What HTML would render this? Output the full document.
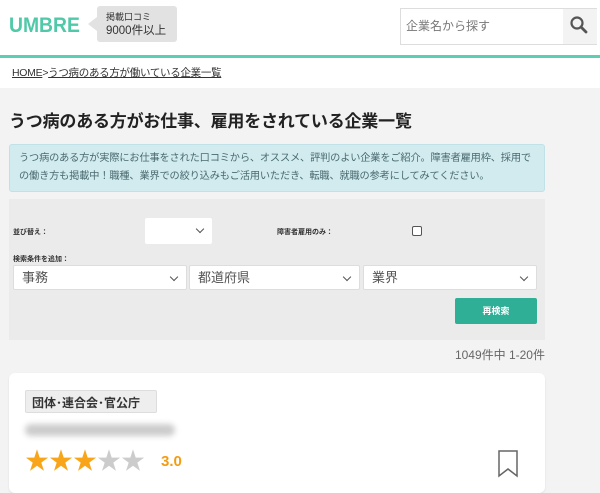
<!DOCTYPE html>
<html><head><meta charset="utf-8"><style>
*{box-sizing:border-box;margin:0;padding:0}
body{width:600px;height:480px;overflow:hidden;background:#f3f3f3;font-family:"Liberation Sans","Noto Sans CJK JP",sans-serif;color:#333;position:relative}
.abs{position:absolute}
.hdr{left:0;top:0;width:600px;height:58px;background:#fff;border-bottom:3px solid #5ccfb2}
.bc{left:0;top:58px;width:600px;height:30px;background:#fff;font-size:10.5px;padding:7px 12px;letter-spacing:-0.3px}
.bc a{color:#333;text-decoration:underline}
.sel{background:#fff;border:1px solid #ddd;border-radius:2px;font-size:13px;color:#555;padding:0 8px;line-height:23px}
.sel:after{content:"";position:absolute;right:9px;top:8px;width:5px;height:5px;border-right:1px solid #555;border-bottom:1px solid #555;transform:rotate(45deg)}
.star{font-size:24px;line-height:24px}
</style></head><body>
<div class="abs hdr">
 <div class="abs" style="left:9px;top:14px;font-size:21px;font-weight:bold;color:#4fc9a8;transform:scaleX(0.92);transform-origin:left">UMBRE</div>
 <div class="abs" style="left:97px;top:6px;width:80px;height:36px;background:#e2e2e2;border-radius:3px;font-size:9px;padding:4px 0 0 9px;line-height:14px">掲載口コミ<br><span style="font-size:11.5px">9000件以上</span></div>
 <div class="abs" style="left:88px;top:17px;width:0;height:0;border-top:7px solid transparent;border-bottom:7px solid transparent;border-right:9px solid #e2e2e2"></div>
 <div class="abs" style="left:400px;top:8px;width:197px;height:37px;border:1px solid #ddd;background:#fff"></div>
 <div class="abs" style="left:406px;top:17px;font-size:12px;color:#777">企業名から探す</div>
 <div class="abs" style="left:563px;top:9px;width:34px;height:35px;background:#f3f3f3"></div>
 <svg class="abs" style="left:569px;top:15px" width="20" height="20" viewBox="0 0 20 20"><circle cx="8" cy="8" r="5.5" fill="none" stroke="#555" stroke-width="2.2"/><path d="M12 12l5 5" stroke="#555" stroke-width="2.8" stroke-linecap="round"/></svg>
</div>
<div class="abs bc"><a>HOME</a>&gt;<a>うつ病のある方が働いている企業一覧</a></div>
<div class="abs" style="left:9px;top:107px;font-size:17px;font-weight:bold;color:#222;letter-spacing:-0.2px">うつ病のある方がお仕事、雇用をされている企業一覧</div>
<div class="abs" style="left:9px;top:144px;width:536px;height:48px;background:#d2ebef;border:1px solid #bfe1e7;border-radius:3px;font-size:10.2px;color:#4a6a70;padding:5px 9px;line-height:18px;letter-spacing:-0.15px">うつ病のある方が実際にお仕事をされた口コミから、オススメ、評判のよい企業をご紹介。障害者雇用枠、採用での働き方も掲載中！職種、業界での絞り込みもご活用いただき、転職、就職の参考にしてみてください。</div>
<div class="abs" style="left:9px;top:199px;width:536px;height:141px;background:#ebebeb"></div>
<div class="abs" style="left:13px;top:227px;font-size:7px;font-weight:bold">並び替え：</div>
<div class="abs sel" style="left:145px;top:218px;width:67px;height:26px;border:none"></div>
<div class="abs" style="left:277px;top:227px;font-size:7px;font-weight:bold">障害者雇用のみ：</div>
<div class="abs" style="left:412px;top:226px;width:10px;height:10px;border:1px solid #555;border-radius:2px;background:#fff"></div>
<div class="abs" style="left:13px;top:254px;font-size:7px;font-weight:bold">検索条件を追加：</div>
<div class="abs sel" style="left:13px;top:265px;width:174px;height:25px">事務</div>
<div class="abs sel" style="left:189px;top:265px;width:171px;height:25px">都道府県</div>
<div class="abs sel" style="left:363px;top:265px;width:174px;height:25px">業界</div>
<div class="abs" style="left:455px;top:298px;width:82px;height:26px;background:#2fb096;border-radius:2px;color:#fff;font-size:9px;font-weight:bold;text-align:center;line-height:26px">再検索</div>
<div class="abs" style="left:380px;top:346px;width:165px;text-align:right;font-size:12px;color:#666">1049件中 1-20件</div>
<div class="abs" style="left:9px;top:373px;width:536px;height:120px;background:#fff;border-radius:6px;box-shadow:0 1px 2px rgba(0,0,0,.08)"></div>
<div class="abs" style="left:25px;top:390px;width:132px;height:23px;background:#eee;border:1px solid #ddd;border-radius:2px;font-size:12px;font-weight:bold;padding:3px 6px">団体･連合会･官公庁</div>
<div class="abs" style="left:25px;top:424px;width:150px;height:12px;background:#ccc;border-radius:6px;filter:blur(3px)"></div>
<div class="abs star" style="left:25px;top:450px;color:#f9a51a">★★★<span style="color:#ccc">★★</span></div>
<div class="abs" style="left:161px;top:453px;font-size:15px;font-weight:bold;color:#f39c12">3.0</div>
<svg class="abs" style="left:497px;top:450px" width="22" height="28" viewBox="0 0 22 28"><path d="M2 1h18v25l-9-7-9 7z" fill="none" stroke="#666" stroke-width="1.5"/></svg>
</body></html>
